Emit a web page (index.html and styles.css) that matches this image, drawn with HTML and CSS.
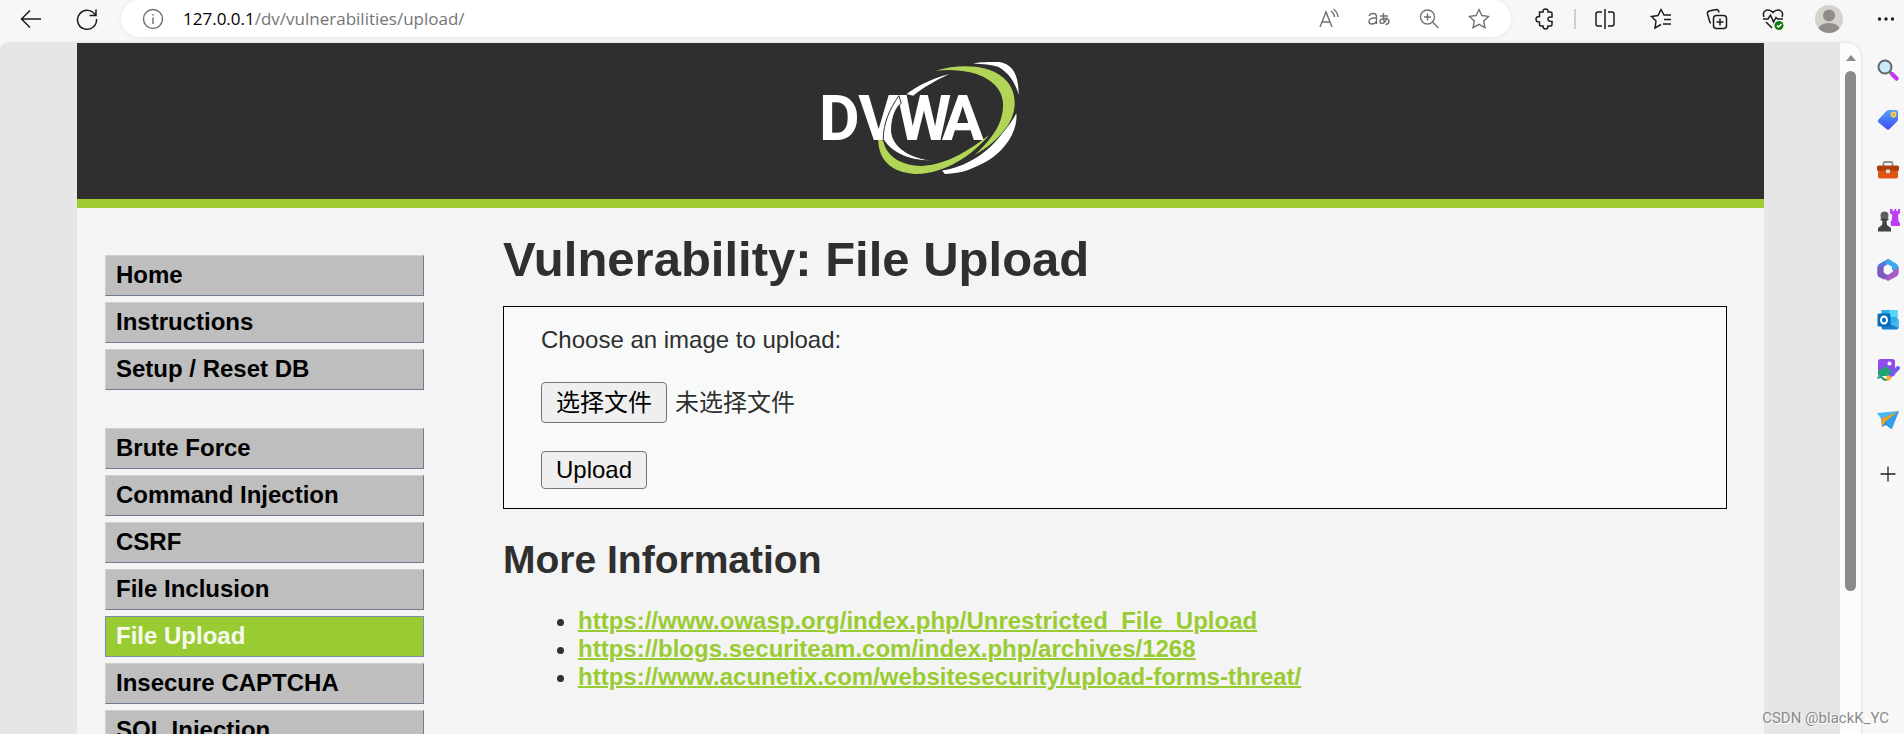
FILE: index.html
```html
<!DOCTYPE html>
<html lang="en">
<head>
<meta charset="utf-8">
<title>Vulnerability: File Upload</title>
<link rel="stylesheet" href="styles.css">
</head>
<body>
<div class="browser">
  <div class="toolbar">
    <button class="tool" aria-label="Back"><svg width="24" height="24" viewBox="0 0 24 24"><path d="M22 12H3M11 3.500L2.500 12l8.500 8.500"/></svg></button>
    <button class="tool" aria-label="Refresh"><svg width="24" height="24" viewBox="0 0 24 24"><path d="M20.500 8.500A9.500 9.500 0 1 0 21.500 12M21 2.500V8.500H14.500"/></svg></button>
    <div class="address">
      <svg class="site-info" width="24" height="24" viewBox="0 0 24 24"><circle cx="12" cy="12" r="9.500"/><path d="M12 10.500V17M12 7v1.500"/></svg>
      <div class="url" role="textbox" aria-label="Address">127.0.0.1<span class="url-path">/dv/vulnerabilities/upload/</span></div>
      <button class="address-tool" aria-label="Read aloud"><svg width="24" height="24" viewBox="0 0 24 24"><path d="M3 20L9 5l6 15M5 15h8M14 4q3 2 3.500 6M16.500 2q4 3 4.500 8"/></svg></button>
      <button class="address-tool" aria-label="Translate"><svg width="24" height="24" viewBox="0 0 24 24"><path d="M2 9q1-2.500 4-2.500 3.500 0 3.500 3.500v7M9.500 11Q2 10.500 2 14.500 2 17 5 17q3.500 0 4.500-3M13 9h8M16.500 6q-.5 6 1 10M20 10.500q-2 6-5 6-2 0-2-2 0-3 5-3 4 0 4 3 0 2.500-3.500 3"/></svg></button>
      <button class="address-tool" aria-label="Zoom"><svg width="24" height="24" viewBox="0 0 24 24"><circle cx="10.500" cy="10" r="7"/><path d="M15.500 15l6 6M10.500 6.500v7M7 10h7"/></svg></button>
      <button class="address-tool" aria-label="Add to favorites"><svg width="24" height="24" viewBox="0 0 24 24"><path d="M12 2.500l2.900 6 6.600.9-4.800 4.600 1.200 6.600-5.900-3.200-5.900 3.200 1.200-6.600L2.500 9.400l6.600-.9z"/></svg></button>
    </div>
    <button class="tool extensions" aria-label="Extensions"><svg width="24" height="24" viewBox="0 0 24 24"><path d="M6.500 5H10q-.3-3 2.500-3T15 5h2.500q1.500 0 1.500 1.500V10q-4-.5-4 2t4 2.500v3q0 1.500-1.500 1.500H15q0 3-2.500 3T10 19H8q-1.500 0-1.500-1.500V15q-3.500 0-3.500-2.800T6.500 9.500z"/></svg></button>
    <span class="divider"></span>
    <button class="tool" aria-label="Split screen"><svg width="24" height="24" viewBox="0 0 24 24"><path d="M9 5H5q-2 0-2 2v10q0 2 2 2h4M15 5h4q2 0 2 2v10q0 2-2 2h-4M12 2v20"/></svg></button>
    <button class="tool" aria-label="Favorites"><svg width="24" height="24" viewBox="0 0 24 24"><path d="M22 8h-7L12 2.500 9 8.500l-6.500 1L7 14l-1 7 6-3.500M15 12.500h7M14 17h8"/></svg></button>
    <button class="tool" aria-label="Collections"><svg width="24" height="24" viewBox="0 0 24 24"><rect x="8.500" y="8.500" width="13" height="13" rx="3"/><path d="M15 11.500v7M11.500 15h7M6 16q-1 0-1.500-2L2.500 7q-.5-2 1.500-3l7.500-1.500q2 0 2.500 3"/></svg></button>
    <button class="tool" aria-label="Browser essentials"><svg width="24" height="24" viewBox="0 0 24 24"><path d="M3 10Q1 4.500 6 3q3.500-.5 6 2.500Q14.500 2.500 18 3q5 1.500 3 7M2 12h5l2.500-4 3 7 2.500-4.500 1.500 1.500H22M5 15l6 6"/><circle class="status-dot" cx="18" cy="18.500" r="4.500"/><path class="status-tick" d="M16 18.500l1.500 1.500 3-3"/></svg></button>
    <button class="tool" aria-label="Profile"><svg width="28" height="28" viewBox="0 0 28 28"><clipPath id="face"><circle cx="14" cy="14" r="14"/></clipPath><g clip-path="url(#face)" stroke="none"><path fill="#d5d2ce" d="M0 0h28v28H0z"/><circle fill="#918c88" cx="14" cy="10.500" r="6"/><ellipse fill="#918c88" cx="14" cy="25" rx="11" ry="7"/></g></svg></button>
    <button class="tool more" aria-label="Settings and more"><svg width="24" height="24" viewBox="0 0 24 24"><g class="dots"><circle cx="5.500" cy="12" r="1.700"/><circle cx="12" cy="12" r="1.700"/><circle cx="18.500" cy="12" r="1.700"/></g></svg></button>
  </div>

  <div class="workspace">
    <div class="viewport">
      <div class="page">
        <header class="header">
          <svg class="logo" width="197" height="112" viewBox="66 36 592 336" role="img" aria-label="DVWA">
            <g class="logo-green">
              <path d="M408 62C480 40 560 46 600 75C655 110 655 180 625 225C595 270 560 295 525 315C578 265 612 220 610 160C607 95 530 50 408 62Z"/>
              <path d="M568 255C520 315 430 375 345 372C275 368 235 330 235 268L250 272C258 310 290 345 365 348C440 345 510 300 568 255Z"/>
            </g>
            <g class="logo-white">
              <path d="M520 40C545 36 560 36 600 36C640 44 657 75 657 135C648 100 628 68 595 50C575 43 550 42 520 40Z"/>
              <path d="M650 190C655 240 620 300 560 335C520 355 490 372 435 372L427 362C500 350 560 310 600 260C625 230 640 210 650 190Z"/>
              <path d="M448 72C390 88 350 110 320 132L340 137C360 120 400 95 448 72Z"/>
              <text class="logo-text" y="269" x="57 175 290 426">DVWA</text>
              <path class="logo-edge" d="M297 137C270 175 250 220 250 268C275 310 335 337 405 332C330 326 275 290 275 240C275 200 290 170 304 160Z"/>
            </g>
          </svg>
        </header>
        <div class="columns">
          <nav class="menu">
            <ul class="menu-group">
              <li><a class="menu-link" href="#">Home</a></li>
              <li><a class="menu-link" href="#">Instructions</a></li>
              <li><a class="menu-link" href="#">Setup / Reset DB</a></li>
            </ul>
            <ul class="menu-group">
              <li><a class="menu-link" href="#">Brute Force</a></li>
              <li><a class="menu-link" href="#">Command Injection</a></li>
              <li><a class="menu-link" href="#">CSRF</a></li>
              <li><a class="menu-link" href="#">File Inclusion</a></li>
              <li><a class="menu-link selected" href="#" aria-current="page">File Upload</a></li>
              <li><a class="menu-link" href="#">Insecure CAPTCHA</a></li>
              <li><a class="menu-link" href="#">SQL Injection</a></li>
            </ul>
          </nav>
          <main class="main">
            <h1 class="title">Vulnerability: File Upload</h1>
            <form class="upload-box">
              <div>Choose an image to upload:</div>
              <div class="file-row">
                <input class="file-input" type="file" id="uploaded">
                <label class="file-button" for="uploaded">选择文件</label>
                <span>未选择文件</span>
              </div>
              <button class="submit" type="button">Upload</button>
            </form>
            <h2 class="subtitle">More Information</h2>
            <ul class="links">
              <li><a href="#">https://www.owasp.org/index.php/Unrestricted_File_Upload</a></li>
              <li><a href="#">https://blogs.securiteam.com/index.php/archives/1268</a></li>
              <li><a href="#">https://www.acunetix.com/websitesecurity/upload-forms-threat/</a></li>
            </ul>
          </main>
        </div>
      </div>
      <div class="scrollbar"><span class="scroll-arrow"></span><span class="scroll-thumb"></span></div>
    </div>

    <aside class="sidebar">
      <button class="app" aria-label="Search"><svg width="24" height="24" viewBox="0 0 24 24"><path d="M14 14l3 3" stroke="#777" stroke-width="3"/><path d="M16.500 16.500l4 4" stroke="#c13af0" stroke-width="4.500" stroke-linecap="round"/><circle cx="9" cy="9" r="6.500" fill="#c8ebfc" stroke="#666" stroke-width="2"/></svg></button>
      <button class="app" aria-label="Shopping"><svg width="24" height="24" viewBox="0 0 24 24"><defs><linearGradient id="tag" x2="0" y2="1"><stop stop-color="#58a0fa"/><stop offset="1" stop-color="#3c4cf5"/></linearGradient></defs><path d="M13 2l7 0q2 0 2 2v7q0 1.500-1 2.500l-7.500 7.500q-1.500 1.500-3 0L2.500 14.500q-1.500-1.500 0-3L10.500 3q1-1 2.500-1z" fill="url(#tag)"/><circle cx="17.500" cy="6.500" r="2" fill="#8b80c0" stroke="#ffd43c" stroke-width="1.800"/></svg></button>
      <button class="app" aria-label="Tools"><svg width="24" height="24" viewBox="0 0 24 24"><path d="M7.500 8V5.500q0-1.500 1.500-1.500h6q1.500 0 1.500 1.500V8" fill="none" stroke="#899092" stroke-width="1.800"/><path d="M2 10h20v8.500q0 2-2 2H4q-2 0-2-2z" fill="#df5518"/><path d="M1 9q0-1.500 1.500-1.500h19Q23 7.500 23 9v3.500H1z" fill="#b33c0c"/><path d="M10 11.500h4v3q-2 2-4 0z" fill="#d9dcdc"/></svg></button>
      <button class="app" aria-label="Games"><svg width="24" height="24" viewBox="0 0 24 24"><path d="M14 1h2.500v2h1.800V1h2v2h1.700V1h2v4l-2 2 .5 6 1.500 2v3h-9l-.5-4 1.300-2 .4-5-2.200-2z" fill="#bd3df4"/><circle cx="8.500" cy="7.500" r="4" fill="#606060"/><path d="M4.500 10.500h8v1.500l-2 1 .5 4 4 3v3.500H2V20l4-3 .5-4-2-1z" fill="#444"/></svg></button>
      <button class="app" aria-label="Microsoft 365"><svg width="24" height="24" viewBox="0 0 24 24"><path d="M12 1L3 6q-1.500 1-1.500 3v7q0 2 1.500 3l4 1.500q-1-1-.5-2.500l1-9L16 3z" fill="#5875df"/><path d="M12 1l8 4.500Q22.500 7 22.500 9v6L16 12V8.500L9 5z" fill="#38a9ea"/><path d="M22.500 9v6q0 2-2 3.500L12 23 5 19l1.500-3 5 1 4.500-3z" fill="#a65bc5"/><path d="M1.500 9v7q0 2 1.500 3l5 2.500 6-5h-4L7.500 14V7z" fill="#795bc1"/><path d="M12 8l4 2v4l-4 3-4-3v-4z" fill="#f7f7f7"/></svg></button>
      <button class="app" aria-label="Outlook"><svg width="24" height="24" viewBox="0 0 24 24"><path d="M5.500 2h16v14h-16z" fill="#2baeec"/><path d="M13.500 2h8v7h-8z" fill="#59d5fb"/><path d="M5.500 11l9 5 8-5v8.500q0 2-2 2h-13q-2 0-2-2z" fill="#187fcf"/><path d="M14 16l8.500-5v9z" fill="#45b9ed"/><rect x="1.500" y="5.500" width="13" height="13" rx="1.500" fill="#096bbb"/><ellipse cx="8" cy="12" rx="3" ry="3.500" fill="none" stroke="#fff" stroke-width="2"/></svg></button>
      <button class="app" aria-label="Image editor"><svg width="24" height="24" viewBox="0 0 24 24"><rect x="2" y="1" width="17" height="17" rx="2.500" fill="#8f4cef"/><path d="M2 13l6-4q2-1 4 1l6 6-2 2H4q-2 0-2-2z" fill="#1ea374"/><circle cx="13.500" cy="5.500" r="2" fill="#fff"/><path d="M22 10l-8 8" stroke="#6c61ed" stroke-width="4" stroke-linecap="round"/><path d="M11 17.500q2-1 4.500 2-1 4-6 3.500z" fill="#ffb02e"/><path d="M1.500 20q4-2 5 0t4 2" fill="none" stroke="#179b69" stroke-width="2"/></svg></button>
      <button class="app" aria-label="Drop"><svg width="24" height="24" viewBox="0 0 24 24"><path d="M1 5l22-2-17 9z" fill="#48b9f1"/><path d="M5 11l18-8-8 18-5-4-4 2z" fill="#2988e4"/><path d="M5 11l18-8L9 14l-2 5z" fill="#f2a51b"/><path d="M9 14L23 3l-7 18z" fill="#329fec"/></svg></button>
      <button class="app customize" aria-label="Customize"><svg width="24" height="24" viewBox="0 0 24 24"><path d="M12 4.500v15M4.500 12h15" stroke="#222" stroke-width="1.300"/></svg></button>
    </aside>
  </div>
  <div class="watermark">CSDN @blackK_YC</div>
</div>
</body>
</html>
```
FILE: styles.css
```css
* { box-sizing: border-box; }

body {
  margin: 0;
  overflow: hidden;
  background: #f7f7f7;
  font-family: "Liberation Sans", "Noto Sans CJK SC", sans-serif;
}

button { font-family: inherit; }

svg { display: block; }

.browser {
  display: flex;
  flex-direction: column;
  height: 100vh;
}

.toolbar {
  flex: none;
  display: flex;
  height: 43px;
  padding: 0 0 6px 3px;
}

.tool, .address-tool, .app {
  flex: none;
  display: flex;
  align-items: center;
  justify-content: center;
  padding: 0;
  border: 0;
  background: none;
}

.tool { width: 56px; }

.tool svg {
  fill: none;
  stroke: #1b1b1b;
  stroke-width: 1.5;
}

.tool .status-dot { fill: #107c10; stroke: none; }
.tool .status-tick { stroke: #fff; }
.tool .dots { fill: #1b1b1b; stroke: none; }

.tool.more { width: 47px; padding-left: 11px; }

.extensions { margin-left: 6px; }

.address {
  flex: 1;
  display: flex;
  align-items: center;
  margin-left: 6px;
  padding: 0 7px 0 20px;
  border-radius: 19px;
  background: #fff;
  box-shadow: 0 1px 4px #e8e8e8;
}

.address svg {
  fill: none;
  stroke: #707070;
  stroke-width: 1.4;
}

.address-tool { width: 50px; }

.url {
  flex: 1;
  margin-left: 18px;
  color: #000;
  font: 17px/24px "Open Sans", sans-serif;
}

.url-path { color: #757575; }

.divider {
  width: 2px;
  height: 20px;
  margin: 9px 1px 0;
  background: #cfcfcf;
}

.workspace {
  flex: 1;
  display: flex;
  min-height: 0;
}

.viewport {
  flex: 1;
  display: flex;
  overflow: hidden;
  border-radius: 10px 14px 0 0;
  background: #e6e6e6;
  box-shadow: 0 0 3px #ccc;
}

.page {
  flex: 1;
  min-width: 0;
  margin: 0 76px 0 77px;
  background: #f4f4f4;
  color: #2f2f2f;
  font-size: 24px;
  line-height: 28px;
}

.header {
  display: flex;
  justify-content: center;
  padding: 19px 0 25px;
  border-bottom: 9px solid #a1cc33;
  background: #2f2f2f;
}

.logo-green { fill: #b1d557; }
.logo-white { fill: #fff; }
.logo-edge { stroke: #2f2f2f; stroke-width: 3; }
.logo-text { font: bold 188px Roboto, sans-serif; }

.columns {
  display: flex;
  gap: 79px;
  padding: 0 37px 0 28px;
}

.menu {
  flex: none;
  display: flex;
  flex-direction: column;
  gap: 38px;
  width: 319px;
  padding-top: 47px;
}

.menu-group {
  display: flex;
  flex-direction: column;
  gap: 6px;
  margin: 0;
  padding: 0;
  list-style: none;
}

.menu-link {
  display: block;
  padding: 5px 10px 6px;
  border: 1px solid #6f7b90;
  border-top-color: #d0d0d0;
  border-left-color: #d0d0d0;
  background: #bebebe;
  color: #000;
  font-weight: bold;
  text-decoration: none;
}

.menu-link.selected {
  border-color: #7a8db0;
  background: #99cc33;
  color: #f8faf0;
}

.main {
  flex: 1;
  min-width: 0;
  padding-top: 23px;
}

.title {
  margin: 0 0 19px;
  font-size: 49px;
  line-height: 56px;
}

.upload-box {
  display: flex;
  flex-direction: column;
  align-items: flex-start;
  gap: 28px;
  padding: 19px 37px;
  border: 1px solid #000;
  background: #f8faf9;
}

.file-row {
  display: flex;
  align-items: center;
  gap: 8px;
}

.file-input {
  position: absolute;
  width: 1px;
  height: 1px;
  opacity: 0;
}

.file-button, .submit {
  border: 1px solid #767676;
  border-radius: 4px;
  background: #efefef;
  color: #000;
  font-size: 24px;
  line-height: 28px;
}

.file-button { padding: 6px 14px 5px; }
.submit { padding: 4px 14px; }

.subtitle {
  margin: 28px 0 24px;
  font-size: 39px;
  line-height: 46px;
}

.links {
  margin: 0;
  padding-left: 75px;
}

.links a {
  color: #99cc33;
  font-weight: bold;
  text-decoration-thickness: 2px;
}

.scrollbar {
  flex: none;
  display: flex;
  flex-direction: column;
  align-items: center;
  gap: 10px;
  width: 21px;
  padding-top: 12px;
  background: #fcfcfc;
}

.scroll-arrow {
  border: 5px solid transparent;
  border-top: 0;
  border-bottom: 6px solid #8b8b8b;
}

.scroll-thumb {
  width: 11px;
  height: 76.6%;
  border-radius: 6px;
  background: #8b8b8b;
}

.sidebar {
  flex: none;
  display: flex;
  flex-direction: column;
  width: 43px;
  padding: 2px 0 0 11px;
}

.app {
  width: 32px;
  height: 50px;
}

.app svg { fill: none; }

.customize { margin-top: 4px; }

.watermark {
  position: absolute;
  right: 15px;
  bottom: 6px;
  color: #8a8a8a;
  font: 15px/20px Roboto, sans-serif;
  text-shadow: 1px 1px 0 #fff;
}
```
